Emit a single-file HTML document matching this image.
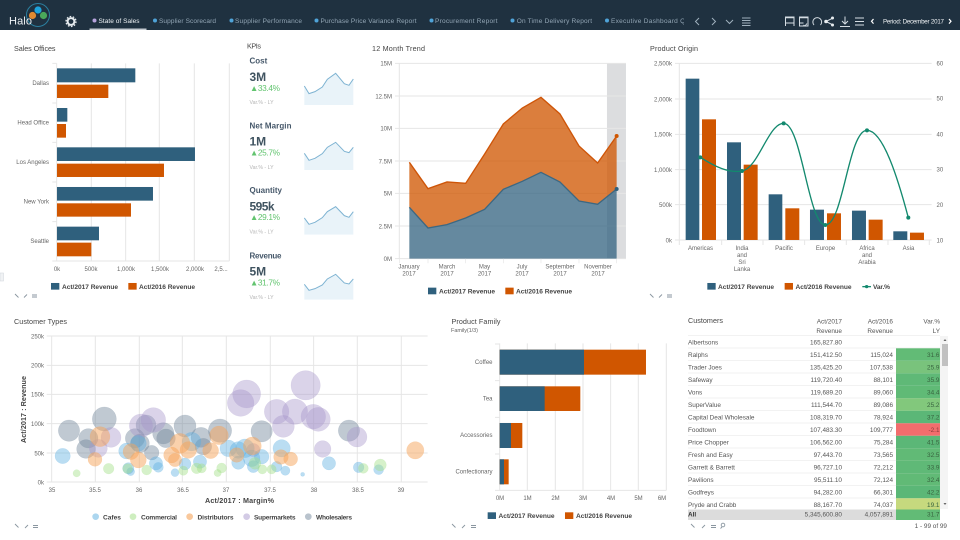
<!DOCTYPE html>
<html lang="en"><head><meta charset="utf-8"><title>Halo – State of Sales</title>
<style>
html,body{margin:0;padding:0;width:960px;height:540px;overflow:hidden;background:#fff}
svg{display:block;font-family:"Liberation Sans",sans-serif}
text{fill:#666;font-size:6px}
.t{fill:#444;font-size:7.2px}
.lg{fill:#444;font-size:6.6px;font-weight:bold}
.at{fill:#444;font-size:7.2px;font-weight:bold}
.e{text-anchor:end}.m{text-anchor:middle}
.tab{fill:#93a6b5;font-size:6.5px}
.g{stroke:#e6e6e6;stroke-width:3;fill:none}
.kt{fill:#46586a;font-size:8px;font-weight:bold}
.kv{fill:#3f5360;font-size:12px;font-weight:bold}
.kp{fill:#62c46f;font-size:8.3px}
.kl{fill:#b5b5b5;font-size:5.2px}
.c{fill:#555;font-size:6.4px}
.v{fill:#38633f;font-size:6.4px;text-anchor:end}
.ic{stroke:#d5dde3;stroke-width:1;fill:none}
.nv{stroke:#9fb0bd;stroke-width:1;fill:none}
.sf{fill:#e9f3f9}
.sl{fill:none;stroke:#7eb3d2;stroke-width:3}
.ca circle{fill:#5aaee0;fill-opacity:.42;stroke:#5aaee0;stroke-opacity:.35}
.co circle{fill:#a5e08a;fill-opacity:.45;stroke:#a5e08a;stroke-opacity:.35}
.di circle{fill:#f5a45a;fill-opacity:.5;stroke:#f5a45a;stroke-opacity:.35}
.su circle{fill:#a897cb;fill-opacity:.42;stroke:#a897cb;stroke-opacity:.35}
.wh circle{fill:#74889c;fill-opacity:.45;stroke:#74889c;stroke-opacity:.4}
</style></head><body>
<svg width="960" height="540" viewBox="0 0 960 540" xmlns="http://www.w3.org/2000/svg">
<defs><clipPath id="tc"><rect x="600" y="10" width="84" height="20"/></clipPath></defs>
<rect width="960" height="540" fill="#fff"/>
<!-- header -->
<rect width="960" height="30" fill="#1f3140"/>
<circle cx="38" cy="15" r="11.5" fill="none" stroke="#2b7f9f" stroke-width="1"/>
<circle cx="38" cy="10" r="3.6" fill="#1ea4dc"/><circle cx="43.5" cy="15.5" r="3.6" fill="#4aa85a"/><circle cx="32.5" cy="15.5" r="3.6" fill="#e08a30"/>
<text x="9" y="24.500" style="fill:#eef2f5;font-size:11px" textLength="23">Halo</text>
<circle cx="71" cy="21.5" r="3.4" fill="none" stroke="#e8edf0" stroke-width="2"/>
<circle cx="71" cy="21.5" r="5" fill="none" stroke="#e8edf0" stroke-width="1.3" stroke-dasharray="1.6 1.55"/>
<circle cx="94.5" cy="20.5" r="2" fill="#b6a3dc"/>
<text x="98.5" y="23" style="fill:#eef2f5;font-size:6.5px" textLength="41">State of Sales</text>
<rect x="89.5" y="28.5" width="57" height="1.5" fill="#c5ccd2"/>
<g fill="#4fa3d8"><circle cx="155" cy="20.5" r="2"/><circle cx="231.5" cy="20.5" r="2"/><circle cx="316.5" cy="20.5" r="2"/><circle cx="431.5" cy="20.5" r="2"/><circle cx="512.5" cy="20.5" r="2"/><circle cx="607" cy="20.5" r="2"/></g>
<text class="tab" x="159" y="23" textLength="57">Supplier Scorecard</text>
<text class="tab" x="235" y="23" textLength="67">Supplier Performance</text>
<text class="tab" x="320.5" y="23" textLength="96">Purchase Price Variance Report</text>
<text class="tab" x="435" y="23" textLength="62.5">Procurement Report</text>
<text class="tab" x="516.7" y="23" textLength="75.3">On Time Delivery Report</text>
<g clip-path="url(#tc)"><text class="tab" x="611" y="23" textLength="84">Executive Dashboard Qtrly</text></g>
<g class="nv"><path d="M699 18l-3.500 3.500 3.500 3.500"/><path d="M712 18l3.500 3.500-3.500 3.500"/><path d="M726 20l3.500 3.500 3.500-3.500"/><path d="M742 18h8.500M742 20.500h8.500M742 23h8.500M742 25.500h8.500"/></g>
<g class="ic">
<path d="M785.500 26V17h8.500v9M785.500 23h8.500"/><path d="M785.500 17.500h8.500" stroke-width="1.500"/>
<path d="M799.500 26V17h8.500v9zM799.500 23h4"/><path d="M799.500 17.500h8.500" stroke-width="1.500"/><path d="M803.500 25l1.500 1 2-2.500"/>
<path d="M814 25a4.400 4.400 0 1 1 6.500 0"/>
<path d="M826 21.500l6-3M826 21.500l6 3"/>
<path d="M845 16.500v7M842 21l3 3 3-3M840 26.500h10"/>
<path d="M855 18h9M855 21.500h9M855 25h9"/></g>
<g fill="#e8edf0"><circle cx="826" cy="21.500" r="1.800"/><circle cx="832.500" cy="18" r="1.500"/><circle cx="832.500" cy="25" r="1.500"/></g>
<path d="M873.500 19l-2 2.300 2 2.300M949 19l2 2.300-2 2.300" stroke="#fff" stroke-width="1.200" fill="none"/>
<text x="883" y="23.500" style="fill:#f1f4f6;font-size:6.200px" textLength="61">Period: December 2017</text>

<!-- titles -->
<text class="t" x="14" y="51" textLength="41.500">Sales Offices</text>
<text class="t" x="247" y="48.500" textLength="14">KPIs</text>
<text class="t" x="372" y="51" textLength="53">12 Month Trend</text>
<text class="t" x="650" y="51" textLength="48">Product Origin</text>
<text class="t" x="14" y="324" textLength="53">Customer Types</text>
<text class="t" x="451.500" y="324" textLength="49">Product Family</text>
<text x="451" y="332" style="font-size:5.500px" textLength="27">Family(1/3)</text>
<text class="t" x="688" y="323" textLength="35">Customers</text>

<!-- Sales offices -->
<g transform="translate(0,40) scale(.3333)">
<path class="g" d="M170 70V663M274 70V663M377 70V663M478 70V663M583 70V663M688 70V663M157 663H688M157 70H170M157 189H170M157 307H170M157 426H170M157 545H170"/>
<g fill="#2f607d"><rect x="171" y="85" width="235" height="42"/><rect x="171" y="204" width="31" height="41"/><rect x="171" y="322" width="414" height="41"/><rect x="171" y="441" width="288" height="41"/><rect x="171" y="560" width="126" height="41"/></g>
<g fill="#d05600"><rect x="171" y="134" width="154" height="40"/><rect x="171" y="252" width="27" height="41"/><rect x="171" y="371" width="321" height="40"/><rect x="171" y="490" width="222" height="40"/><rect x="171" y="608" width="103" height="41"/></g>
<rect x="153" y="729" width="25" height="20" fill="#2f607d"/><rect x="385" y="729" width="25" height="20" fill="#d05600"/>
</g>
<text class="e" x="49" y="85">Dallas</text><text class="e" x="49" y="124.500">Head Office</text><text class="e" x="49" y="164">Los Angeles</text><text class="e" x="49" y="203.500">New York</text><text class="e" x="49" y="243">Seattle</text>
<text class="m" x="57" y="271">0k</text><text class="m" x="91" y="271">500k</text><text class="m" x="126" y="271">1,000k</text><text class="m" x="160" y="271">1,500k</text><text class="m" x="195" y="271">2,000k</text><text class="m" x="221" y="271">2,5...</text>
<text class="lg" x="62" y="289" textLength="56">Act/2017 Revenue</text><text class="lg" x="139" y="289" textLength="56">Act/2016 Revenue</text>

<!-- KPIs -->
<text class="kt" x="249.500" y="63.500">Cost</text><text class="kv" x="249.500" y="81">3M</text><text class="kp" x="250" y="91" textLength="30">▲33.4%</text><text class="kl" x="249.500" y="104">Var.% - LY</text>
<text class="kt" x="249.500" y="128.500" textLength="42">Net Margin</text><text class="kv" x="249.500" y="145.500">1M</text><text class="kp" x="250" y="155.500" textLength="30">▲25.7%</text><text class="kl" x="249.500" y="169">Var.% - LY</text>
<text class="kt" x="249.500" y="193.200" textLength="32.500">Quantity</text><text class="kv" x="249.500" y="210.500" textLength="25">595k</text><text class="kp" x="250" y="220.200" textLength="30">▲29.1%</text><text class="kl" x="249.500" y="233.700">Var.% - LY</text>
<text class="kt" x="249.500" y="258.500" textLength="32">Revenue</text><text class="kv" x="249.500" y="275.500">5M</text><text class="kp" x="250" y="285.300" textLength="30">▲31.7%</text><text class="kl" x="249.500" y="299">Var.% - LY</text>
<g transform="translate(240,40) scale(.3333)">
<path class="sf" d="M193 138L207 161 225 155 247 141 262 118 287 100 313 131 327 136 340 117V195H193Z"/><path class="sl" d="M193 138L207 161 225 155 247 141 262 118 287 100 313 131 327 136 340 117"/>
<path class="sf" d="M193 340L207 361 225 355 247 341 262 322 287 307 313 334 327 338 340 322V390H193Z"/><path class="sl" d="M193 340L207 361 225 355 247 341 262 322 287 307 313 334 327 338 340 322"/>
<path class="sf" d="M193 534L207 553 225 547 247 533 262 515 287 500 313 527 327 532 340 515V584H193Z"/><path class="sl" d="M193 534L207 553 225 547 247 533 262 515 287 500 313 527 327 532 340 515"/>
<path class="sf" d="M193 733L207 751 225 746 247 735 262 717 287 703 313 729 327 732 340 717V779H193Z"/><path class="sl" d="M193 733L207 751 225 746 247 735 262 717 287 703 313 729 327 732 340 717"/>
</g>

<!-- Trend -->
<g transform="translate(365,40) scale(.3333)">
<rect x="726" y="70" width="57" height="586" fill="#dcdddf"/>
<path class="g" d="M90 70H783M90 168H783M90 265H783M90 363H783M90 460H783M90 558H783M90 656H783M103 70V656"/>
<path d="M133 367L189 446 246 426 302 430 359 342 415 252 472 204 528 172 585 222 642 318 698 369 755 288V447L698 493 642 483 585 426 528 397 472 424 415 448 359 508 302 534 246 554 189 564 133 502Z" fill="#d05600" fill-opacity=".76"/>
<path d="M133 502L189 564 246 554 302 534 359 508 415 448 472 424 528 397 585 426 642 483 698 493 755 447V656H133Z" fill="#2f607d" fill-opacity=".74"/>
<path d="M133 367L189 446 246 426 302 430 359 342 415 252 472 204 528 172 585 222 642 318 698 369 755 288" fill="none" stroke="#ce5508" stroke-width="4"/>
<path d="M133 502L189 564 246 554 302 534 359 508 415 448 472 424 528 397 585 426 642 483 698 493 755 447" fill="none" stroke="#3c6883" stroke-width="4"/>
<circle cx="755" cy="288" r="6" fill="#d05600"/><circle cx="755" cy="447" r="6" fill="#2f607d"/>
<path class="g" d="M103 656V670M189 656V670M302 656V670M415 656V670M528 656V670M642 656V670M755 656V670" style="stroke-width:2"/>
<rect x="189" y="743" width="25" height="20" fill="#2f607d"/><rect x="421" y="743" width="25" height="20" fill="#d05600"/>
</g>
<text class="e" x="392" y="65.500">15M</text><text class="e" x="392" y="98.500">12.5M</text><text class="e" x="392" y="130.500">10M</text><text class="e" x="392" y="163.500">7.5M</text><text class="e" x="392" y="195.500">5M</text><text class="e" x="392" y="228.500">2.5M</text><text class="e" x="392" y="261">0M</text>
<text class="m" x="409" y="268.500">January</text><text class="m" x="409" y="275.500">2017</text><text class="m" x="447" y="268.500">March</text><text class="m" x="447" y="275.500">2017</text><text class="m" x="484.500" y="268.500">May</text><text class="m" x="484.500" y="275.500">2017</text><text class="m" x="522" y="268.500">July</text><text class="m" x="522" y="275.500">2017</text><text class="m" x="560" y="268.500">September</text><text class="m" x="560" y="275.500">2017</text><text class="m" x="598" y="268.500">November</text><text class="m" x="598" y="275.500">2017</text>
<text class="lg" x="439" y="293.500" textLength="56">Act/2017 Revenue</text><text class="lg" x="516" y="293.500" textLength="56">Act/2016 Revenue</text>

<!-- Origin -->
<g transform="translate(645,40) scale(.3333)">
<path class="g" d="M90 70H860M90 177H860M90 283H860M90 389H860M90 494H860M90 600H860M103 70V615M230 600V615M354 600V615M479 600V615M604 600V615M729 600V615M853 600V615"/>
<g fill="#2f607d"><rect x="122" y="116" width="41" height="484"/><rect x="246" y="307" width="42" height="293"/><rect x="371" y="463" width="41" height="137"/><rect x="495" y="509" width="42" height="91"/><rect x="621" y="512" width="42" height="88"/><rect x="745" y="574" width="42" height="26"/></g>
<g fill="#d05600"><rect x="171" y="238" width="42" height="362"/><rect x="296" y="374" width="42" height="226"/><rect x="421" y="505" width="42" height="95"/><rect x="546" y="520" width="42" height="80"/><rect x="671" y="539" width="42" height="61"/><rect x="795" y="578" width="42" height="22"/></g>
<path d="M166 352C210 380 250 400 291 393C340 385 370 250 416 250C470 250 490 555 541 555C595 555 610 271 666 271C715 271 760 420 790 533" fill="none" stroke="#13896e" stroke-width="4"/>
<g fill="#13896e"><circle cx="166" cy="352" r="6"/><circle cx="291" cy="393" r="6"/><circle cx="416" cy="250" r="6"/><circle cx="541" cy="555" r="6"/><circle cx="666" cy="271" r="6"/><circle cx="790" cy="533" r="6"/><circle cx="665" cy="740" r="5"/></g>
<rect x="187" y="729" width="25" height="20" fill="#2f607d"/><rect x="419" y="729" width="25" height="20" fill="#d05600"/>
<path d="M652 740H678" stroke="#13896e" stroke-width="4"/>
</g>
<text class="e" x="672" y="65.500">2,500k</text><text class="e" x="672" y="101.500">2,000k</text><text class="e" x="672" y="136.500">1,500k</text><text class="e" x="672" y="172">1,000k</text><text class="e" x="672" y="207">500k</text><text class="e" x="672" y="242.500">0k</text>
<text x="936.500" y="65.500">60</text><text x="936.500" y="100.500">50</text><text x="936.500" y="136.500">40</text><text x="936.500" y="171.500">30</text><text x="936.500" y="207">20</text><text x="936.500" y="242.500">10</text>
<text class="m" x="700.500" y="250">Americas</text><text class="m" x="742" y="250">India</text><text class="m" x="742" y="257">and</text><text class="m" x="742" y="264">Sri</text><text class="m" x="742" y="271">Lanka</text><text class="m" x="784" y="250">Pacific</text><text class="m" x="825.500" y="250">Europe</text><text class="m" x="867" y="250">Africa</text><text class="m" x="867" y="257">and</text><text class="m" x="867" y="264">Arabia</text><text class="m" x="908.500" y="250">Asia</text>
<text class="lg" x="718" y="289" textLength="56">Act/2017 Revenue</text><text class="lg" x="795.500" y="289" textLength="56">Act/2016 Revenue</text><text class="lg" x="873" y="289" textLength="17">Var.%</text>

<!-- Bubble -->
<g transform="translate(0,310) scale(.3333)">
<path class="g" d="M140 78H1283M140 166H1283M140 253H1283M140 341H1283M140 429H1283M140 516H1283M155 78V516M286 78V516M418 78V516M547 78V516M679 78V516M811 78V516M941 78V516M1072 78V516M1204 78V516"/>
<g class="wh"><circle cx="207" cy="362" r="32"/><circle cx="265" cy="385" r="29"/><circle cx="258" cy="417" r="28"/><circle cx="313" cy="327" r="36"/><circle cx="405" cy="385" r="29"/><circle cx="438" cy="345" r="30"/><circle cx="420" cy="400" r="28"/><circle cx="455" cy="428" r="22"/><circle cx="490" cy="370" r="32"/><circle cx="498" cy="385" r="28"/><circle cx="555" cy="348" r="33"/><circle cx="603" cy="382" r="30"/><circle cx="610" cy="410" r="25"/><circle cx="660" cy="362" r="35"/><circle cx="785" cy="364" r="32"/><circle cx="1047" cy="362" r="32"/></g>
<g class="su"><circle cx="333" cy="382" r="30"/><circle cx="295" cy="415" r="27"/><circle cx="423" cy="347" r="35"/><circle cx="460" cy="330" r="37"/><circle cx="740" cy="252" r="42"/><circle cx="722" cy="279" r="40"/><circle cx="917" cy="226" r="44"/><circle cx="830" cy="305" r="37"/><circle cx="885" cy="305" r="38"/><circle cx="850" cy="349" r="33"/><circle cx="940" cy="320" r="37"/><circle cx="955" cy="328" r="36"/><circle cx="968" cy="417" r="25"/><circle cx="1071" cy="381" r="30"/><circle cx="760" cy="420" r="20"/></g>
<g class="ca"><circle cx="188" cy="438" r="23"/><circle cx="385" cy="475" r="17"/><circle cx="392" cy="485" r="12"/><circle cx="380" cy="423" r="24"/><circle cx="415" cy="400" r="24"/><circle cx="468" cy="460" r="20"/><circle cx="475" cy="472" r="15"/><circle cx="525" cy="488" r="12"/><circle cx="555" cy="462" r="18"/><circle cx="575" cy="395" r="28"/><circle cx="600" cy="455" r="20"/><circle cx="685" cy="415" r="25"/><circle cx="715" cy="420" r="25"/><circle cx="735" cy="415" r="28"/><circle cx="715" cy="458" r="20"/><circle cx="760" cy="470" r="18"/><circle cx="785" cy="440" r="22"/><circle cx="845" cy="415" r="26"/><circle cx="830" cy="470" r="16"/><circle cx="856" cy="482" r="14"/><circle cx="908" cy="493" r="6"/><circle cx="987" cy="460" r="20"/><circle cx="1076" cy="472" r="16"/><circle cx="1136" cy="479" r="15"/><circle cx="755" cy="445" r="25"/></g>
<g class="co"><circle cx="230" cy="490" r="11"/><circle cx="326" cy="476" r="16"/><circle cx="383" cy="476" r="15"/><circle cx="440" cy="480" r="15"/><circle cx="550" cy="482" r="14"/><circle cx="590" cy="475" r="16"/><circle cx="605" cy="475" r="14"/><circle cx="653" cy="489" r="11"/><circle cx="665" cy="474" r="15"/><circle cx="765" cy="460" r="18"/><circle cx="787" cy="478" r="14"/><circle cx="815" cy="478" r="14"/><circle cx="1090" cy="475" r="15"/><circle cx="1141" cy="465" r="18"/></g>
<g class="di"><circle cx="285" cy="448" r="21"/><circle cx="300" cy="380" r="30"/><circle cx="393" cy="425" r="24"/><circle cx="415" cy="450" r="24"/><circle cx="515" cy="435" r="24"/><circle cx="525" cy="450" r="20"/><circle cx="540" cy="400" r="30"/><circle cx="565" cy="420" r="25"/><circle cx="632" cy="422" r="24"/><circle cx="657" cy="376" r="28"/><circle cx="710" cy="435" r="22"/><circle cx="757" cy="408" r="27"/><circle cx="843" cy="441" r="22"/><circle cx="872" cy="447" r="21"/><circle cx="1246" cy="421" r="26"/></g>
<circle cx="287" cy="620" r="10" fill="#5aaee0" fill-opacity=".5"/><circle cx="399" cy="620" r="10" fill="#a5e08a" fill-opacity=".55"/><circle cx="569" cy="620" r="10" fill="#f5a45a" fill-opacity=".6"/><circle cx="740" cy="620" r="10" fill="#a897cb" fill-opacity=".5"/><circle cx="925" cy="620" r="10" fill="#74889c" fill-opacity=".5"/>
</g>
<text class="e" x="44" y="338.500">250k</text><text class="e" x="44" y="367.500">200k</text><text class="e" x="44" y="396.500">150k</text><text class="e" x="44" y="426">100k</text><text class="e" x="44" y="455.500">50k</text><text class="e" x="44" y="484.500">0k</text>
<text class="m" x="52" y="492">35</text><text class="m" x="95" y="492">35.5</text><text class="m" x="139" y="492">36</text><text class="m" x="183" y="492">36.5</text><text class="m" x="226" y="492">37</text><text class="m" x="270" y="492">37.5</text><text class="m" x="314" y="492">38</text><text class="m" x="358" y="492">38.5</text><text class="m" x="401" y="492">39</text>
<text class="at" x="205" y="503" textLength="69">Act/2017 : Margin%</text>
<text class="at" transform="translate(26,443) rotate(-90)" x="0" y="0" textLength="67">Act/2017 : Revenue</text>
<text class="lg" x="103" y="519.500">Cafes</text><text class="lg" x="141" y="519.500" textLength="36">Commercial</text><text class="lg" x="197.500" y="519.500" textLength="36">Distributors</text><text class="lg" x="254" y="519.500" textLength="41.500">Supermarkets</text><text class="lg" x="316" y="519.500" textLength="36">Wholesalers</text>

<!-- Family -->
<g transform="translate(445,310) scale(.3333)">
<path class="g" d="M164 100V541M247 100V541M331 100V541M414 100V541M497 100V541M580 100V541M664 100V541M150 541H664M150 102H164M150 212H164M150 322H164M150 432H164"/>
<g fill="#d05600"><rect x="164" y="119" width="439" height="75"/><rect x="164" y="229" width="242" height="74"/><rect x="164" y="339" width="68" height="75"/><rect x="164" y="448" width="27" height="75"/></g>
<g fill="#2f607d"><rect x="164" y="119" width="253" height="75"/><rect x="164" y="229" width="135" height="74"/><rect x="164" y="339" width="34" height="75"/><rect x="164" y="448" width="13" height="75"/></g>
<rect x="128" y="607" width="25" height="20" fill="#2f607d"/><rect x="360" y="607" width="25" height="20" fill="#d05600"/>
</g>
<text class="e" x="492.500" y="364">Coffee</text><text class="e" x="492.500" y="400.500">Tea</text><text class="e" x="492.500" y="437">Accessories</text><text class="e" x="492.500" y="473.500">Confectionary</text>
<text class="m" x="500" y="500">0M</text><text class="m" x="527.500" y="500">1M</text><text class="m" x="555.500" y="500">2M</text><text class="m" x="583" y="500">3M</text><text class="m" x="611" y="500">4M</text><text class="m" x="638.500" y="500">5M</text><text class="m" x="662" y="500">6M</text>
<text class="lg" x="498.500" y="518" textLength="56">Act/2017 Revenue</text><text class="lg" x="576" y="518" textLength="56">Act/2016 Revenue</text>

<!-- Table -->
<text class="c e" x="842" y="323.500">Act/2017</text><text class="c e" x="893" y="323.500">Act/2016</text><text class="c e" x="940" y="323.500">Var.%</text>
<text class="c e" x="842" y="333">Revenue</text><text class="c e" x="893" y="333">Revenue</text><text class="c e" x="940" y="333">LY</text>
<path d="M688 335.500H940M688 348H940M688 360.500H940M688 373H940M688 385.500H940M688 398H940M688 410.500H940M688 423H940M688 435.500H940M688 448H940M688 460.500H940M688 473H940M688 485.500H940M688 498H940" stroke="#eeeeee" stroke-width=".7"/>
<rect x="688" y="509.500" width="208" height="10.500" fill="#dcdcdc"/>
<rect x="896" y="348.300" width="44" height="12.500" fill="#62bb76"/><rect x="896" y="360.800" width="44" height="12.500" fill="#79c37c"/><rect x="896" y="373.300" width="44" height="12.500" fill="#5fb977"/><rect x="896" y="385.800" width="44" height="12.500" fill="#60ba76"/><rect x="896" y="398.300" width="44" height="12.500" fill="#82c87c"/><rect x="896" y="410.800" width="44" height="12.500" fill="#5bb777"/><rect x="896" y="423.300" width="44" height="12.500" fill="#f26d6d"/><rect x="896" y="435.800" width="44" height="12.500" fill="#5bb777"/><rect x="896" y="448.300" width="44" height="12.500" fill="#61ba76"/><rect x="896" y="460.800" width="44" height="12.500" fill="#5fb977"/><rect x="896" y="473.300" width="44" height="12.500" fill="#61ba76"/><rect x="896" y="485.800" width="44" height="12.500" fill="#5bb777"/><rect x="896" y="498.300" width="44" height="11.200" fill="#c6d97e"/><rect x="896" y="509.500" width="44" height="10.500" fill="#62bb76"/>
<rect x="940" y="336" width="8" height="173" fill="#f4f4f4"/><rect x="942" y="344" width="6" height="22" fill="#c1c1c1"/>
<path d="M943.500 341l1.500-2 1.500 2zM943.500 503l1.500 2 1.500-2z" fill="#666"/>
<text class="c" x="688" y="344.500">Albertsons</text><text class="c e" x="842" y="344.500">165,827.80</text>
<text class="c" x="688" y="357">Ralphs</text><text class="c e" x="842" y="357">151,412.50</text><text class="c e" x="893" y="357">115,024</text><text class="v" x="939.500" y="357">31.6</text>
<text class="c" x="688" y="369.500">Trader Joes</text><text class="c e" x="842" y="369.500">135,425.20</text><text class="c e" x="893" y="369.500">107,538</text><text class="v" x="939.500" y="369.500">25.9</text>
<text class="c" x="688" y="382">Safeway</text><text class="c e" x="842" y="382">119,720.40</text><text class="c e" x="893" y="382">88,101</text><text class="v" x="939.500" y="382">35.9</text>
<text class="c" x="688" y="394.500">Vons</text><text class="c e" x="842" y="394.500">119,689.20</text><text class="c e" x="893" y="394.500">89,060</text><text class="v" x="939.500" y="394.500">34.4</text>
<text class="c" x="688" y="407">SuperValue</text><text class="c e" x="842" y="407">111,544.70</text><text class="c e" x="893" y="407">89,086</text><text class="v" x="939.500" y="407">25.2</text>
<text class="c" x="688" y="419.500">Capital Deal Wholesale</text><text class="c e" x="842" y="419.500">108,319.70</text><text class="c e" x="893" y="419.500">78,924</text><text class="v" x="939.500" y="419.500">37.2</text>
<text class="c" x="688" y="432">Foodtown</text><text class="c e" x="842" y="432">107,483.30</text><text class="c e" x="893" y="432">109,777</text><text class="v" x="939.500" y="432" style="fill:#8a3a3a">-2.1</text>
<text class="c" x="688" y="444.500">Price Chopper</text><text class="c e" x="842" y="444.500">106,562.00</text><text class="c e" x="893" y="444.500">75,284</text><text class="v" x="939.500" y="444.500">41.5</text>
<text class="c" x="688" y="457">Fresh and Easy</text><text class="c e" x="842" y="457">97,443.70</text><text class="c e" x="893" y="457">73,565</text><text class="v" x="939.500" y="457">32.5</text>
<text class="c" x="688" y="469.500">Garrett &amp; Barrett</text><text class="c e" x="842" y="469.500">96,727.10</text><text class="c e" x="893" y="469.500">72,212</text><text class="v" x="939.500" y="469.500">33.9</text>
<text class="c" x="688" y="482">Pavilions</text><text class="c e" x="842" y="482">95,511.10</text><text class="c e" x="893" y="482">72,124</text><text class="v" x="939.500" y="482">32.4</text>
<text class="c" x="688" y="494.500">Godfreys</text><text class="c e" x="842" y="494.500">94,282.00</text><text class="c e" x="893" y="494.500">66,301</text><text class="v" x="939.500" y="494.500">42.2</text>
<text class="c" x="688" y="507">Pryde and Crabb</text><text class="c e" x="842" y="507">88,167.70</text><text class="c e" x="893" y="507">74,037</text><text class="v" x="939.500" y="507">19.1</text>
<text class="c" x="688" y="516.500" style="font-weight:bold;fill:#333">All</text><text class="c e" x="842" y="516.500">5,345,600.80</text><text class="c e" x="893" y="516.500">4,057,891</text><text class="v" x="939.500" y="516.500">31.7</text>
<text class="c e" x="947" y="528">1 - 99 of 99</text>

<!-- small panel icons -->
<g stroke="#8a96a0" stroke-width=".9" fill="none">
<path d="M15 294l3.500 3.500M24 297.500l3-3"/><path d="M32 295h5M32 297h5"/>
<path d="M650 294l3.500 3.500M659 297.500l3-3M667 295h5M667 297h5"/>
<path d="M15 524l3.500 3.500M25 528l3-3M33 525.500h5M33 527.500h5"/>
<path d="M452 524l3.500 3.500M462 528l3-3M471 525.500h5M471 527.500h5"/>
<path d="M691 524l3.500 3.500M702 528l3-3M711 525.500h5M711 527.500h5"/><circle cx="723" cy="525" r="1.800"/><path d="M722 527l-1.500 1.500"/>
</g>
<rect x="0" y="273" width="3.500" height="8" fill="#f0f2f4" stroke="#cfd5da" stroke-width=".5"/>
</svg>
</body></html>
